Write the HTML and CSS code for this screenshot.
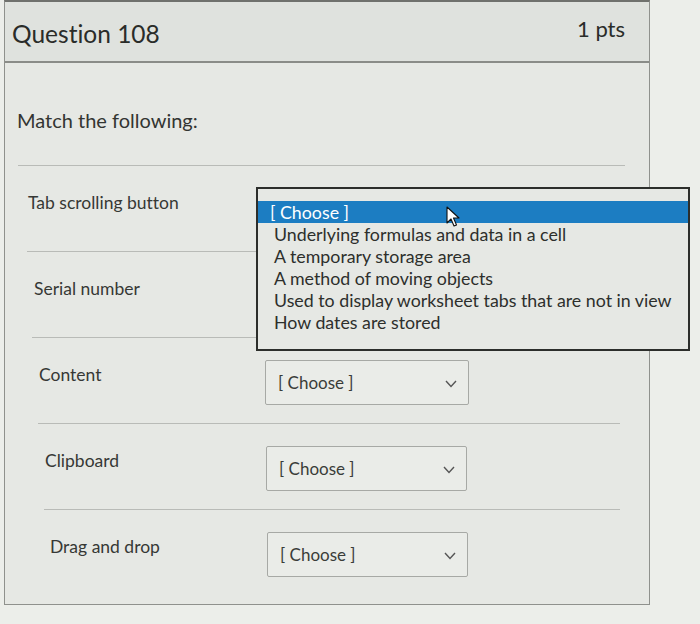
FILE: index.html
```html
<!DOCTYPE html>
<html lang="en">
<head>
<meta charset="utf-8">
<title>Question 108</title>
<link rel="stylesheet" href="styles.css">
</head>
<body>
<div class="card">
  <div class="card-header">
    <h2 class="q-title">Question 108</h2>
    <span class="q-pts">1 pts</span>
  </div>
  <div class="card-body">
    <p class="prompt">Match the following:</p>
    <div class="rule rule-top"></div>
    <div class="row row-1">
      <div class="label">Tab scrolling button</div>
      <div class="select-wrap">
        <div class="select covered"></div>
        <div class="listbox">
          <div class="opt selected">[ Choose ]</div>
          <div class="opt">Underlying formulas and data in a cell</div>
          <div class="opt">A temporary storage area</div>
          <div class="opt">A method of moving objects</div>
          <div class="opt">Used to display worksheet tabs that are not in view</div>
          <div class="opt">How dates are stored</div>
          <svg class="cursor" viewBox="0 0 14 22" width="14" height="22"><path d="M1 1 L1 17 L5 13 L8 20 L10.5 19 L7.5 12 L13 12 Z" fill="#fff" stroke="#111" stroke-width="1.1" stroke-linejoin="round"/></svg>
        </div>
      </div>
    </div>
    <div class="rule rule-1"></div>
    <div class="row row-2">
      <div class="label">Serial number</div>
      <div class="select-wrap">
        <div class="select covered"></div>
      </div>
    </div>
    <div class="rule rule-2"></div>
    <div class="row row-3">
      <div class="label">Content</div>
      <div class="select-wrap">
        <div class="select"><span>[ Choose ]</span><svg class="chev" viewBox="0 0 12 8" width="12" height="8"><path d="M1 1 L6 6.5 L11 1" fill="none" stroke="#555" stroke-width="1.4"/></svg></div>
      </div>
    </div>
    <div class="rule rule-3"></div>
    <div class="row row-4">
      <div class="label">Clipboard</div>
      <div class="select-wrap">
        <div class="select"><span>[ Choose ]</span><svg class="chev" viewBox="0 0 12 8" width="12" height="8"><path d="M1 1 L6 6.5 L11 1" fill="none" stroke="#555" stroke-width="1.4"/></svg></div>
      </div>
    </div>
    <div class="rule rule-4"></div>
    <div class="row row-5">
      <div class="label">Drag and drop</div>
      <div class="select-wrap">
        <div class="select"><span>[ Choose ]</span><svg class="chev" viewBox="0 0 12 8" width="12" height="8"><path d="M1 1 L6 6.5 L11 1" fill="none" stroke="#555" stroke-width="1.4"/></svg></div>
      </div>
    </div>
  </div>
</div>
</body>
</html>
```

FILE: styles.css
```css
* { box-sizing: border-box; }

html, body {
  margin: 0;
  padding: 0;
}

body {
  background: #eceeea;
  font-family: Lato, "Open Sans", "Liberation Sans", sans-serif;
  font-variant-ligatures: none;
  color: #333532;
  width: 700px;
  height: 624px;
  overflow: hidden;
}

.card {
  margin-left: 4px;
  width: 646px;
  border: 1px solid #8f918d;
  border-top: 2px solid #6f716d;
  background: #e6e8e4;
}

.card-header {
  height: 61px;
  background: #dfe2de;
  border-bottom: 2px solid #8a8c88;
  display: flex;
  align-items: center;
  justify-content: space-between;
  padding: 0 24px 0 7px;
}

.q-title {
  margin: 4px 0 0 0;
  font-size: 24.5px;
  font-weight: 400;
  color: #2a2c29;
}

.q-pts {
  font-size: 22px;
  color: #2a2c29;
  margin-top: -6px;
}

.card-body {
  padding: 45px 24px 9px 12px;
}

.prompt {
  margin: 0;
  font-size: 20px;
  line-height: 24px;
  color: #333532;
}

.rule {
  height: 1px;
  background: #b9bbb7;
  margin-right: 5px;
}

.rule-top {
  margin-top: 33px;
  margin-left: 1px;
  margin-right: 0;
}

.rule-1 { margin-left: 10px; }
.rule-2 { margin-left: 15px; }
.rule-3 { margin-left: 21px; }
.rule-4 { margin-left: 27px; }

.row {
  display: flex;
  align-items: flex-start;
  height: 85px;
  padding-top: 22px;
}

.label {
  font-size: 17.5px;
  line-height: 20px;
  color: #363835;
  padding-top: 5px;
}

.row-1 .label { padding-left: 11px; width: 247px; }
.row-2 .label { padding-left: 17px; width: 248px; }
.row-3 .label { padding-left: 22px; width: 248px; }
.row-4 .label { padding-left: 28px; width: 249px; }
.row-5 .label { padding-left: 33px; width: 250px; }

.select-wrap {
  position: relative;
}

.select {
  width: 204px;
  height: 45px;
  border: 1px solid #a7a9a5;
  border-radius: 2px;
  background: #eaece8;
  display: flex;
  align-items: center;
  justify-content: space-between;
  padding: 0 11px 0 12px;
  font-size: 17px;
  color: #3a3c39;
}

.select.covered {
  border-color: transparent;
  background: transparent;
}

.row-4 .select, .row-5 .select { width: 201px; }

.chev { margin-top: 2px; }

.listbox {
  position: absolute;
  top: -1px;
  left: -8px;
  width: 434px;
  height: 164px;
  border: 2px solid #2c2e2b;
  background: #e6e8e4;
  padding-top: 12px;
  font-size: 17.8px;
  color: #2d2f2c;
  z-index: 5;
}

.opt {
  height: 22px;
  line-height: 22px;
  padding-left: 16px;
  white-space: nowrap;
}

.opt.selected {
  background: #1c7dc2;
  color: #ffffff;
  padding-left: 12px;
}

.cursor {
  position: absolute;
  top: 17px;
  left: 188px;
}
```
